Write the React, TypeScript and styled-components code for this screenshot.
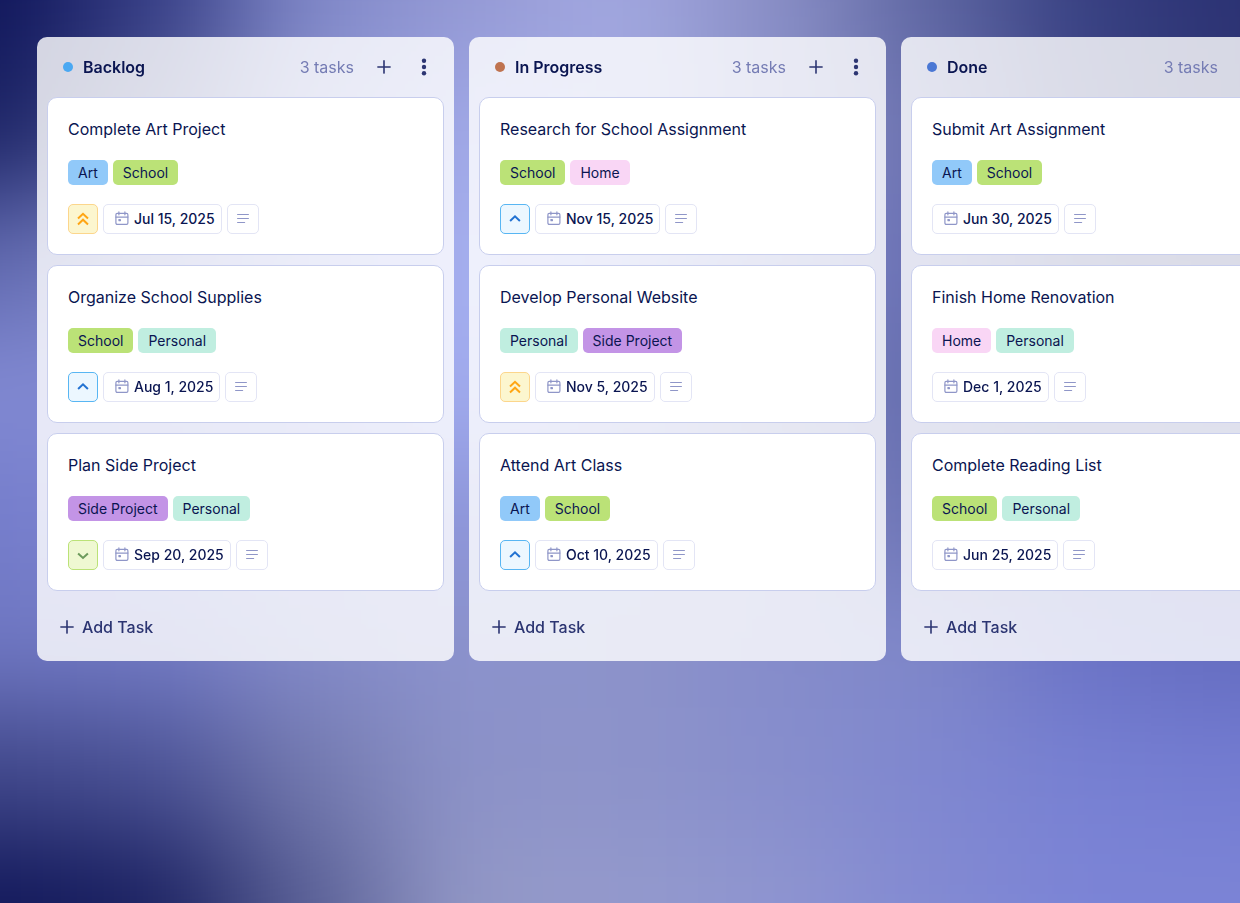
import React from 'react';
import styled, { createGlobalStyle } from 'styled-components';

const GlobalStyle = createGlobalStyle`
  *, *::before, *::after { box-sizing: border-box; }
  body {
    margin: 0;
    font-family: Inter, 'Liberation Sans', sans-serif;
    color: #0a1551;
    background: #7c84c8;
  }
  h2, h3, p, ul { margin: 0; padding: 0; }
  ul { list-style: none; }
  button {
    margin: 0;
    padding: 0;
    border: 0;
    background: none;
    font: inherit;
    color: inherit;
    cursor: pointer;
  }
  svg { display: block; }
`;

type TagName = 'Art' | 'School' | 'Home' | 'Personal' | 'Side Project';
type Level = 'high' | 'medium' | 'low';

interface Task {
  title: string;
  tags: TagName[];
  date: string;
  priority?: Level;
}

interface ColumnData {
  name: string;
  dot: string;
  tasks: Task[];
}

const tagColors: Record<TagName, string> = {
  Art: '#91c9f9',
  School: '#bbe277',
  Home: '#f9d6f5',
  Personal: '#c0eee0',
  'Side Project': '#c394e6',
};

const priorityColors: Record<Level, { fill: string; line: string; icon: string }> = {
  high: { fill: '#fcf6cf', line: '#fcd68c', icon: '#ffa513' },
  medium: { fill: '#ecf7ff', line: '#58b6f3', icon: '#2272d2' },
  low: { fill: '#eff8d2', line: '#bbe277', icon: '#6c9a5c' },
};

const columns: ColumnData[] = [
  {
    name: 'Backlog',
    dot: '#4aa8f2',
    tasks: [
      { title: 'Complete Art Project', tags: ['Art', 'School'], date: 'Jul 15, 2025', priority: 'high' },
      { title: 'Organize School Supplies', tags: ['School', 'Personal'], date: 'Aug 1, 2025', priority: 'medium' },
      { title: 'Plan Side Project', tags: ['Side Project', 'Personal'], date: 'Sep 20, 2025', priority: 'low' },
    ],
  },
  {
    name: 'In Progress',
    dot: '#bf7350',
    tasks: [
      { title: 'Research for School Assignment', tags: ['School', 'Home'], date: 'Nov 15, 2025', priority: 'medium' },
      { title: 'Develop Personal Website', tags: ['Personal', 'Side Project'], date: 'Nov 5, 2025', priority: 'high' },
      { title: 'Attend Art Class', tags: ['Art', 'School'], date: 'Oct 10, 2025', priority: 'medium' },
    ],
  },
  {
    name: 'Done',
    dot: '#4a77d4',
    tasks: [
      { title: 'Submit Art Assignment', tags: ['Art', 'School'], date: 'Jun 30, 2025' },
      { title: 'Finish Home Renovation', tags: ['Home', 'Personal'], date: 'Dec 1, 2025' },
      { title: 'Complete Reading List', tags: ['School', 'Personal'], date: 'Jun 25, 2025' },
    ],
  },
];

/* Colour mesh of the wallpaper, row by row; the cells are blurred together. */
const mesh = [
  ['#10165a', '#363e86', '#7f87c8', '#9499d4', '#a2a7e0', '#8a8fc6', '#5e66a2', '#374082', '#2b3273'],
  ['#1c2466', '#4e5592', '#9097d0', '#a0a8e8', '#a4abe0', '#8a90c8', '#6c72b0', '#3e4484', '#2e3474'],
  ['#5f68ae', '#8288c8', '#979ee0', '#a6b0f0', '#a0a7e4', '#8088c8', '#6a70b4', '#4a508e', '#3f4580'],
  ['#8088d2', '#868ed4', '#929ae0', '#a3adf0', '#959bda', '#767db8', '#666eb0', '#555c9c', '#545a98'],
  ['#757dcc', '#8087d0', '#8890d4', '#8f97dc', '#8d94d0', '#8a90c4', '#6970b4', '#646cb4', '#6068b0'],
  ['#6f77c2', '#727ac4', '#838ac8', '#8b92cc', '#8d93ca', '#858ccb', '#7f87c8', '#6a72c6', '#646cc0'],
  ['#40478a', '#4a5194', '#7379ae', '#8c92c8', '#8d93ca', '#878ecc', '#7f87d0', '#7780d2', '#747cd2'],
  ['#12185a', '#1b2160', '#5a6096', '#9398c6', '#949acc', '#8f95d0', '#838ad2', '#7c84d6', '#7c84d6'],
];

const cellW = 155;
const cellH = 129;

const WallpaperSvg = styled.svg`
  position: fixed;
  inset: 0;
  z-index: -1;
  width: 100%;
  height: 100%;
`;

const Wallpaper = () => (
  <WallpaperSvg viewBox="0 0 1240 903" preserveAspectRatio="none" aria-hidden="true">
    <filter id="soften" filterUnits="userSpaceOnUse" x="-400" y="-400" width="2040" height="1703" colorInterpolationFilters="sRGB">
      <feGaussianBlur stdDeviation="60 50" />
    </filter>
    <g filter="url(#soften)">
      {mesh.map((row, r) =>
        row.map((fill, c) => {
          const left = c === 0 ? -400 : (c - 0.5) * cellW;
          const right = c === row.length - 1 ? 1640 : (c + 0.5) * cellW + 1;
          const top = r === 0 ? -400 : (r - 0.5) * cellH;
          const bottom = r === mesh.length - 1 ? 1303 : (r + 0.5) * cellH + 1;
          return <rect key={`${r}-${c}`} x={left} y={top} width={right - left} height={bottom - top} fill={fill} />;
        }),
      )}
    </g>
  </WallpaperSvg>
);

const Board = styled.main`
  display: flex;
  align-items: flex-start;
  gap: 15px;
  min-height: 100vh;
  padding: 37px;
  overflow-x: auto;
  scrollbar-width: none;
`;

const ColumnPanel = styled.section`
  flex: 0 0 417px;
  display: flex;
  flex-direction: column;
  padding: 0 10px 14px;
  border-radius: 10px;
  background: rgba(255, 255, 255, 0.81);
`;

const ColumnHeader = styled.header`
  display: flex;
  align-items: center;
  height: 60px;
  padding: 0 5px 0 16px;
`;

const StatusDot = styled.span<{ $color: string }>`
  width: 10px;
  height: 10px;
  margin-right: 10px;
  border-radius: 50%;
  background: ${(p) => p.$color};
`;

const ColumnName = styled.h2`
  flex: 1;
  font-size: 16px;
  line-height: 24px;
  font-weight: 600;
`;

const TaskCount = styled.p`
  margin-right: 15px;
  font-size: 16px;
  line-height: 24px;
  color: #757cb4;
`;

const IconButton = styled.button`
  display: grid;
  place-items: center;
  width: 30px;
  height: 30px;
  color: #2c3572;

  & + & { margin-left: 10px; }
`;

const CardList = styled.ul`
  display: flex;
  flex-direction: column;
  gap: 10px;
`;

const Card = styled.li`
  display: flex;
  flex-direction: column;
  gap: 19px;
  padding: 19px 20px 20px;
  border: 1px solid #c8ceed;
  border-radius: 10px;
  background: #fff;
`;

const CardTitle = styled.h3`
  font-size: 16px;
  line-height: 24px;
  font-weight: 400;
`;

const Row = styled.div`
  display: flex;
  gap: 5px;
`;

const Tag = styled.span<{ $color: string }>`
  padding: 0 10px;
  border-radius: 5px;
  background: ${(p) => p.$color};
  font-size: 14px;
  line-height: 25px;
`;

const MetaButton = styled.button`
  display: flex;
  align-items: center;
  justify-content: center;
  gap: 5px;
  min-width: 32px;
  height: 30px;
  border: 1px solid #e3e5f5;
  border-radius: 5px;
  color: #8f96c8;
`;

const DateButton = styled(MetaButton)`
  padding: 0 6px 0 11px;
`;

const DateText = styled.span`
  font-size: 14px;
  line-height: 20px;
  font-weight: 500;
  color: #0a1551;
`;

const PriorityButton = styled(MetaButton)<{ $level: Level }>`
  min-width: 0;
  width: 30px;
  background: ${(p) => priorityColors[p.$level].fill};
  border-color: ${(p) => priorityColors[p.$level].line};
  color: ${(p) => priorityColors[p.$level].icon};
`;

const AddButton = styled.button`
  display: flex;
  align-items: center;
  align-self: flex-start;
  gap: 8px;
  height: 40px;
  margin-top: 16px;
  padding: 0 13px;
  color: #2c3572;
  font-size: 16px;
  line-height: 24px;
  font-weight: 500;
`;

const PlusIcon = () => (
  <svg width="14" height="14" viewBox="0 0 14 14" fill="none" stroke="currentColor" strokeWidth="1.6" strokeLinecap="round" aria-hidden="true">
    <path d="M7 0.9v12.2M0.9 7h12.2" />
  </svg>
);

const DotsIcon = () => (
  <svg width="6" height="18" viewBox="0 0 6 18" fill="currentColor" aria-hidden="true">
    <circle cx="3" cy="2.7" r="2.2" />
    <circle cx="3" cy="9" r="2.2" />
    <circle cx="3" cy="15.3" r="2.2" />
  </svg>
);

const CalendarIcon = () => (
  <svg width="14" height="16" viewBox="0 0 14 16" fill="none" stroke="currentColor" strokeWidth="1.2" strokeLinecap="round" aria-hidden="true">
    <rect x="0.9" y="2.4" width="12" height="11" rx="1.3" />
    <path d="M0.9 6.1h12M3.9 0.9v2.9M9.9 0.9v2.9" />
    <rect x="3.4" y="8" width="2.6" height="2.2" rx="0.4" fill="currentColor" stroke="none" />
  </svg>
);

const LinesIcon = () => (
  <svg width="12" height="12" viewBox="0 0 12 12" fill="none" stroke="currentColor" strokeWidth="1.2" strokeLinecap="round" aria-hidden="true">
    <path d="M0.6 1.5h10.8M0.6 5.5h10.8M0.6 9.5h7" />
  </svg>
);

const priorityPaths: Record<Level, string> = {
  high: 'M3 7.5 8 2.8l5 4.7M3 13.4 8 8.7l5 4.7',
  medium: 'M3.1 9.9 8 5.3l4.9 4.6',
  low: 'M3.1 6.4 8 11l4.9-4.6',
};

const PriorityIcon = ({ level }: { level: Level }) => (
  <svg width="16" height="16" viewBox="0 0 16 16" fill="none" stroke="currentColor" strokeWidth="2" aria-hidden="true">
    <path d={priorityPaths[level]} />
  </svg>
);

const TaskCard = ({ task }: { task: Task }) => (
  <Card>
    <CardTitle>{task.title}</CardTitle>
    <Row>
      {task.tags.map((tag) => (
        <Tag key={tag} $color={tagColors[tag]}>{tag}</Tag>
      ))}
    </Row>
    <Row>
      {task.priority && (
        <PriorityButton type="button" $level={task.priority} aria-label={`Priority: ${task.priority}`}>
          <PriorityIcon level={task.priority} />
        </PriorityButton>
      )}
      <DateButton type="button">
        <CalendarIcon />
        <DateText>{task.date}</DateText>
      </DateButton>
      <MetaButton type="button" aria-label="Description">
        <LinesIcon />
      </MetaButton>
    </Row>
  </Card>
);

const Column = ({ data }: { data: ColumnData }) => (
  <ColumnPanel>
    <ColumnHeader>
      <StatusDot $color={data.dot} />
      <ColumnName>{data.name}</ColumnName>
      <TaskCount>{data.tasks.length} tasks</TaskCount>
      <IconButton type="button" aria-label={`Add task to ${data.name}`}><PlusIcon /></IconButton>
      <IconButton type="button" aria-label={`${data.name} options`}><DotsIcon /></IconButton>
    </ColumnHeader>
    <CardList>
      {data.tasks.map((task) => (
        <TaskCard key={task.title} task={task} />
      ))}
    </CardList>
    <AddButton type="button"><PlusIcon />Add Task</AddButton>
  </ColumnPanel>
);

export default function App() {
  return (
    <>
      <GlobalStyle />
      <Wallpaper />
      <Board>
        {columns.map((column) => (
          <Column key={column.name} data={column} />
        ))}
      </Board>
    </>
  );
}
